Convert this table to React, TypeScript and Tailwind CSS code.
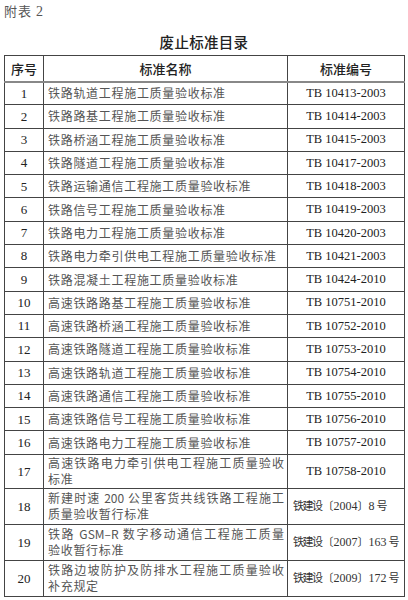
import React from "react";

type Row = { n: number; lines: string[]; code?: string; doc?: [string, string] };

const rows: Row[] = [
  { n: 1, lines: ["铁路轨道工程施工质量验收标准"], code: "TB 10413-2003" },
  { n: 2, lines: ["铁路路基工程施工质量验收标准"], code: "TB 10414-2003" },
  { n: 3, lines: ["铁路桥涵工程施工质量验收标准"], code: "TB 10415-2003" },
  { n: 4, lines: ["铁路隧道工程施工质量验收标准"], code: "TB 10417-2003" },
  { n: 5, lines: ["铁路运输通信工程施工质量验收标准"], code: "TB 10418-2003" },
  { n: 6, lines: ["铁路信号工程施工质量验收标准"], code: "TB 10419-2003" },
  { n: 7, lines: ["铁路电力工程施工质量验收标准"], code: "TB 10420-2003" },
  { n: 8, lines: ["铁路电力牵引供电工程施工质量验收标准"], code: "TB 10421-2003" },
  { n: 9, lines: ["铁路混凝土工程施工质量验收标准"], code: "TB 10424-2010" },
  { n: 10, lines: ["高速铁路路基工程施工质量验收标准"], code: "TB 10751-2010" },
  { n: 11, lines: ["高速铁路桥涵工程施工质量验收标准"], code: "TB 10752-2010" },
  { n: 12, lines: ["高速铁路隧道工程施工质量验收标准"], code: "TB 10753-2010" },
  { n: 13, lines: ["高速铁路轨道工程施工质量验收标准"], code: "TB 10754-2010" },
  { n: 14, lines: ["高速铁路通信工程施工质量验收标准"], code: "TB 10755-2010" },
  { n: 15, lines: ["高速铁路信号工程施工质量验收标准"], code: "TB 10756-2010" },
  { n: 16, lines: ["高速铁路电力工程施工质量验收标准"], code: "TB 10757-2010" },
  { n: 17, lines: ["高速铁路电力牵引供电工程施工质量验收", "标准"], code: "TB 10758-2010" },
  { n: 18, lines: ["新建时速 200 公里客货共线铁路工程施工", "质量验收暂行标准"], doc: ["2004", "8"] },
  { n: 19, lines: ["铁路 GSM–R 数字移动通信工程施工质量", "验收暂行标准"], doc: ["2007", "163"] },
  { n: 20, lines: ["铁路边坡防护及防排水工程施工质量验收", "补充规定"], doc: ["2009", "172"] },
];

function heightFor(r: Row) {
  if (r.n === 17) return "h-[34px]";
  if (r.lines.length > 1) return "h-[36px]";
  return "h-[23.3px]";
}

const CJK = "font-['Noto_Sans_CJK_SC','Noto_Sans',sans-serif]";
const SERIF = "font-['Liberation_Serif','Noto_Sans_CJK_SC',serif]";

export default function App() {
  return (
    <div className="w-[408px] h-[600px] bg-white overflow-hidden px-[4px] pt-[4px]">
      <div className={`${CJK} text-[13px] leading-[14px] text-[#555] tracking-[1px]`}>
        附表 <span className={`${SERIF} text-[14px]`}>2</span>
      </div>
      <div className={`${CJK} mt-[13px] text-center text-[14.5px] leading-[20px] text-[#222] font-medium tracking-[0.3px]`}>
        废止标准目录
      </div>
      <table className="mt-[3px] w-[400px] border-collapse table-fixed">
        <colgroup>
          <col className="w-[39px]" />
          <col className="w-[244px]" />
          <col className="w-[117px]" />
        </colgroup>
        <thead>
          <tr className="h-[26px]">
            {["序号", "标准名称", "标准编号"].map((h) => (
              <th
                key={h}
                className={`${CJK} border border-[#444] border-b-2 border-b-[#888] text-center align-middle text-[13px] font-medium text-[#222] p-0`}
              >
                {h}
              </th>
            ))}
          </tr>
        </thead>
        <tbody>
          {rows.map((r) => (
            <tr key={r.n} className={heightFor(r)}>
              <td className={`${SERIF} border border-[#444] text-center align-middle text-[13px] text-[#222] p-0`}>
                {r.n}
              </td>
              <td className={`${CJK} border border-[#444] align-middle pl-[4px] pr-[3px] py-0 text-[12px] leading-[16px] text-[#555] tracking-[0.7px]`}>
                {r.lines.length === 1 ? (
                  <div className="whitespace-nowrap">{r.lines[0]}</div>
                ) : (
                  <>
                    <div className="text-justify [text-align-last:justify] whitespace-nowrap tracking-[0px]">
                      {r.lines[0]}
                    </div>
                    <div className="whitespace-nowrap">{r.lines[1]}</div>
                  </>
                )}
              </td>
              <td className="border border-[#444] align-middle p-0">
                {r.code ? (
                  <div className={`${SERIF} text-center text-[12.5px] text-[#222]`}>{r.code}</div>
                ) : (
                  <div className="pl-[5px] whitespace-nowrap text-[#333] flex items-baseline">
                    <span className={`${CJK} text-[11px] tracking-[-1.5px]`}>铁建设</span>
                    <span className={`${CJK} text-[11px] ml-[1px]`}>〔</span>
                    <span className={`${SERIF} text-[12px]`}>{r.doc![0]}</span>
                    <span className={`${CJK} text-[11px]`}>〕</span>
                    <span className={`${SERIF} text-[12px]`}>{r.doc![1]}</span>
                    <span className={`${CJK} text-[11px] ml-[2px]`}>号</span>
                  </div>
                )}
              </td>
            </tr>
          ))}
        </tbody>
      </table>
    </div>
  );
}
